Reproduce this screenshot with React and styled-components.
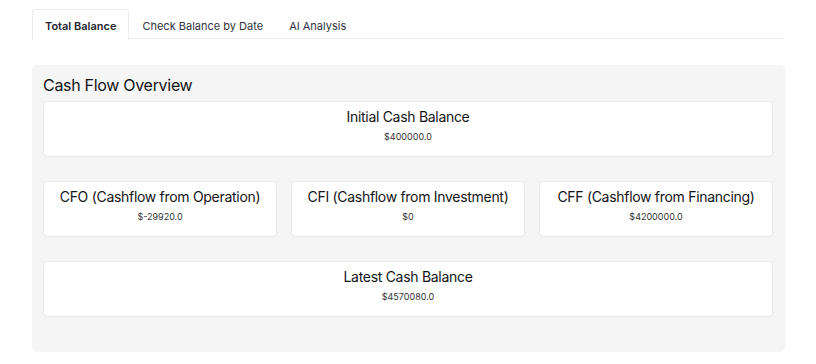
import React from "react";
import styled, { createGlobalStyle } from "styled-components";

const Global = createGlobalStyle`
  html, body { margin: 0; padding: 0; background: #ffffff; }
  body { font-family: Inter, "Noto Sans", Arial, sans-serif; color: #262730; }
  * { box-sizing: border-box; }
`;

const Page = styled.div`
  padding: 9px 31px 0 32px;
`;

const TabBar = styled.div`
  display: flex;
  border-bottom: 1px solid #ececec;
  height: 30px;
`;

const Tab = styled.div`
  display: flex;
  align-items: center;
  padding: 1px 12px 0;
  font-size: 11px;
  height: 31px;
  margin-bottom: -1px;
  color: ${(p) => (p.$active ? "#262730" : "#31333f")};
  font-weight: ${(p) => (p.$active ? 600 : 400)};
  background: ${(p) => (p.$active ? "#ffffff" : "transparent")};
  border: 1px solid ${(p) => (p.$active ? "#ececec" : "transparent")};
  border-bottom: none;
  border-radius: 4px 4px 0 0;
`;

const Panel = styled.section`
  margin-top: 26px;
  background: #f5f5f5;
  border-radius: 5px;
  padding: 11px 12px 11px 11px;
`;

const Title = styled.h2`
  margin: 0 0 6px 0;
  font-size: 16px;
  font-weight: 400;
  letter-spacing: -0.3px;
  line-height: 19px;
  color: #141418;
`;

const Card = styled.div`
  background: #ffffff;
  border: 1px solid #ebebeb;
  border-radius: 4px;
  padding: 6px 8px 14px;
  text-align: center;
  margin-bottom: 24px;
`;

const Row = styled.div`
  display: grid;
  grid-template-columns: 1fr 1fr 1fr;
  gap: 14px;
`;

const CardTitle = styled.div`
  font-size: 14px;
  line-height: 17px;
  font-weight: 400;
  letter-spacing: -0.3px;
  color: #141418;
  margin-bottom: 6px;
`;

const Value = styled.div`
  font-size: 9px;
  line-height: 11px;
  color: #333338;
`;

function Stat({ title, value }) {
  return (
    <Card>
      <CardTitle>{title}</CardTitle>
      <Value>{value}</Value>
    </Card>
  );
}

export default function App() {
  return (
    <>
      <Global />
      <Page>
        <TabBar>
          <Tab $active>Total Balance</Tab>
          <Tab>Check Balance by Date</Tab>
          <Tab>AI Analysis</Tab>
        </TabBar>
        <Panel>
          <Title>Cash Flow Overview</Title>
          <Stat title="Initial Cash Balance" value="$400000.0" />
          <Row>
            <Stat title="CFO (Cashflow from Operation)" value="$-29920.0" />
            <Stat title="CFI (Cashflow from Investment)" value="$0" />
            <Stat title="CFF (Cashflow from Financing)" value="$4200000.0" />
          </Row>
          <Stat title="Latest Cash Balance" value="$4570080.0" />
        </Panel>
      </Page>
    </>
  );
}
